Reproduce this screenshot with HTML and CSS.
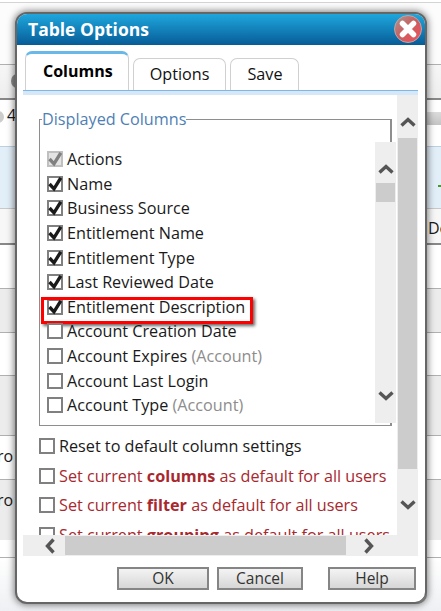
FILE: index.html
```html
<!DOCTYPE html>
<html lang="en">
<head>
    <meta charset="UTF-8">
    <meta name="viewport" content="width=device-width, initial-scale=1.0">
    <title>Table Options</title>
    <link rel="stylesheet" href="styles.css">
</head>
<body>
    <svg class="defs" width="0" height="0">
        <symbol id="tick" viewBox="0 0 16 16">
            <path d="M2.5 8 L7 12.8 L13.8 1.8" fill="none" stroke="currentColor" stroke-width="3.4"/>
        </symbol>
        <symbol id="chev" viewBox="0 0 16 10">
            <path d="M1.5 8.5 L8 2.5 L14.5 8.5" fill="none" stroke="currentColor" stroke-width="3.4"/>
        </symbol>
    </svg>

    <!-- table behind the dialog -->
    <div class="page">
        <div class="row top"></div>
        <div class="row toolbar"><span class="tool-icon"></span></div>
        <div class="row pager">
            <span class="pager-dot"></span>
            <span class="pager-text">4</span>
            <span class="pager-band"></span>
        </div>
        <div class="row selected"><span class="green-mark"></span></div>
        <div class="row desc"><span class="far-text">De</span></div>
        <div class="row plain h-a"></div>
        <div class="row grey h-a"></div>
        <div class="row plain h-b"></div>
        <div class="row grey h-c"></div>
        <div class="row plain h-a"><span class="near-text">ro</span></div>
        <div class="row grey h-c no-line"><span class="near-text">ro</span></div>
        <div class="row plain h-f"></div>
        <div class="row bottom"></div>
    </div>

    <div class="dialog">
        <div class="title-bar">Table Options</div>
        <svg class="close" width="30" height="30" viewBox="0 0 30 30">
            <defs>
                <linearGradient id="closeFill" x1="0.1" y1="0.1" x2="0.9" y2="0.9">
                    <stop offset="0" stop-color="#ad8f8c"/>
                    <stop offset="0.45" stop-color="#c9605f"/>
                    <stop offset="1" stop-color="#e9525f"/>
                </linearGradient>
            </defs>
            <circle cx="15" cy="15" r="13.5" fill="url(#closeFill)" stroke="#bfa5a5"/>
            <path d="M9.5 9.5 L20.5 20.5 M20.5 9.5 L9.5 20.5" stroke="#fff" stroke-width="5.5" stroke-linecap="round"/>
        </svg>

        <div class="tabs">
            <div class="tab active">Columns</div>
            <div class="tab">Options</div>
            <div class="tab">Save</div>
        </div>
        <div class="tab-rule"></div>

        <div class="panel">
            <div class="panel-main">
                <div class="panel-scroll">
                    <fieldset class="columns">
                        <legend>Displayed Columns</legend>
                        <div class="list-wrap">
                            <ul class="list">
                                <li class="item disabled"><span class="box"><svg width="16" height="16"><use href="#tick"/></svg></span>Actions</li>
                                <li class="item"><span class="box"><svg width="16" height="16"><use href="#tick"/></svg></span>Name</li>
                                <li class="item"><span class="box"><svg width="16" height="16"><use href="#tick"/></svg></span>Business Source</li>
                                <li class="item"><span class="box"><svg width="16" height="16"><use href="#tick"/></svg></span>Entitlement Name</li>
                                <li class="item"><span class="box"><svg width="16" height="16"><use href="#tick"/></svg></span>Entitlement Type</li>
                                <li class="item"><span class="box"><svg width="16" height="16"><use href="#tick"/></svg></span>Last Reviewed Date</li>
                                <li class="item marked"><span class="box"><svg width="16" height="16"><use href="#tick"/></svg></span>Entitlement Description</li>
                                <li class="item"><span class="box"></span>Account Creation Date</li>
                                <li class="item"><span class="box"></span>Account Expires&nbsp;<span class="muted">(Account)</span></li>
                                <li class="item"><span class="box"></span>Account Last Login</li>
                                <li class="item"><span class="box"></span>Account Type&nbsp;<span class="muted">(Account)</span></li>
                            </ul>
                            <div class="vbar inner-bar">
                                <svg class="chev" width="16" height="10"><use href="#chev"/></svg>
                                <div class="thumb"></div>
                                <svg class="chev down" width="16" height="10"><use href="#chev"/></svg>
                            </div>
                        </div>
                    </fieldset>

                    <div class="defaults">
                        <div class="option"><span class="box"></span>Reset to default column settings</div>
                        <div class="option warn"><span class="box"></span><span>Set current <b>columns</b> as default for all users</span></div>
                        <div class="option warn"><span class="box"></span><span>Set current <b>filter</b> as default for all users</span></div>
                        <div class="option warn"><span class="box"></span><span>Set current <b>grouping</b> as default for all users</span></div>
                    </div>
                </div>
                <div class="vbar outer-bar">
                    <svg class="chev" width="16" height="10"><use href="#chev"/></svg>
                    <div class="thumb"></div>
                    <svg class="chev down" width="16" height="10"><use href="#chev"/></svg>
                </div>
            </div>
            <div class="hbar">
                <svg class="chev left" width="16" height="10"><use href="#chev"/></svg>
                <div class="hthumb"></div>
                <svg class="chev right" width="16" height="10"><use href="#chev"/></svg>
            </div>
        </div>

        <div class="buttons">
            <button class="btn ok">OK</button>
            <button class="btn cancel">Cancel</button>
            <button class="btn help">Help</button>
        </div>
        <div class="grip"></div>
    </div>
</body>
</html>
```

FILE: styles.css
```css
body {
    margin: 0;
    width: 441px;
    height: 611px;
    overflow: hidden;
    position: relative;
    background-color: #fff;
    font-family: "Open Sans", sans-serif;
    color: #1a1a1a;
}

.defs {
    position: absolute;
}

/* page behind */
.page {
    display: flex;
    flex-direction: column;
    height: 611px;
}

.row {
    flex: none;
    box-sizing: border-box;
    border-bottom: 1px solid #b0b0b0;
    position: relative;
}

.top {
    height: 63px;
    margin-top: 2px;
    border-top: 1px solid #d4d4d4;
    background: #fcfcfc;
}

.toolbar {
    height: 35px;
    background: linear-gradient(#f6f6f6, #eeeeee);
    border-bottom: 2px solid #888;
}

.tool-icon {
    position: absolute;
    left: 11px;
    top: 9px;
    width: 12px;
    height: 14px;
    border-radius: 50%;
    background: #8c8c8c;
}

.pager {
    height: 47px;
    background: #fff;
    border-bottom: 1px solid #bcd0e2;
}

.pager-text {
    position: absolute;
    left: 7px;
    top: 4px;
    font-size: 16px;
}

.pager-dot {
    position: absolute;
    left: -8px;
    top: 11px;
    width: 12px;
    height: 12px;
    border-radius: 50%;
    background: #ccc;
}

.pager-band {
    position: absolute;
    left: 420px;
    top: 12px;
    width: 21px;
    height: 13px;
    background: linear-gradient(#dcdcdc, #c4c4c4);
}

.selected {
    height: 62px;
    background: #e2eef8;
    border-bottom: 1px solid #c8c8c8;
}

.green-mark {
    position: absolute;
    left: 438px;
    top: 38px;
    width: 3px;
    height: 2px;
    background: #4a9a2a;
}

.desc {
    height: 36px;
    background: #f7f7f7;
    border-bottom: 2px solid #888;
}

.far-text {
    position: absolute;
    left: 428px;
    top: 8px;
    font-size: 16px;
}

.plain {
    background: #fff;
}

.grey {
    background: #ececec;
}

.no-line {
    border-bottom: none;
}

.h-a {
    height: 44px;
}

.h-b {
    height: 43px;
}

.h-c {
    height: 60px;
}

.h-f {
    height: 18px;
}

.bottom {
    flex: 1;
    border-bottom: none;
    background: linear-gradient(#fff, #eef0f3);
}

.near-text {
    position: absolute;
    left: -3px;
    top: 9px;
    font-size: 16px;
}

/* dialog */
.dialog {
    position: absolute;
    left: 15px;
    top: 12px;
    box-sizing: border-box;
    width: 412px;
    height: 592px;
    border: 2px solid #666;
    border-radius: 12px;
    background: #fff;
    box-shadow: 0 0 7px 1px rgba(0, 0, 0, 0.5);
    display: flex;
    flex-direction: column;
}

.title-bar {
    height: 31px;
    flex: none;
    padding-left: 11px;
    line-height: 31px;
    font-size: 17.5px;
    font-weight: 700;
    color: #fff;
    background: linear-gradient(#1ea7dd, #075c97);
    border-radius: 10px 10px 0 0;
}

.close {
    position: absolute;
    right: 2px;
    top: 0;
}

.tabs {
    display: flex;
    align-items: flex-end;
    gap: 4px;
    height: 45px;
    flex: none;
    padding-left: 8px;
    box-sizing: border-box;
    padding-top: 6px;
}

.tab {
    box-sizing: border-box;
    height: 32px;
    padding: 0 16px;
    line-height: 30px;
    font-size: 16.2px;
    color: #111;
    background: #fff;
    border: 1px solid #d0d0d0;
    border-bottom: 0;
    border-radius: 7px 7px 0 0;
}

.tab.active {
    height: 39px;
    padding: 0 15px 0 17px;
    line-height: 34px;
    font-size: 16px;
    font-weight: 700;
    border-top: 3px solid #6ab8e8;
    color: #000;
}

.tab-rule {
    flex: none;
    height: 5px;
    margin: 0 7px 0 6px;
    border-top: 1px solid #7db6ea;
    box-sizing: border-box;
    background: #d6e7f8;
}

.panel {
    flex: none;
    margin: 0 7px 0 6px;
    height: 461px;
    display: flex;
    flex-direction: column;
}

.panel-main {
    display: flex;
    height: 440px;
}

.panel-scroll {
    width: 374px;
    overflow: hidden;
    box-sizing: border-box;
    padding-left: 16px;
}

.columns {
    box-sizing: border-box;
    width: 353px;
    min-width: 0;
    height: 317px;
    margin: 14px 0 0;
    padding: 0;
    border: 1px solid #8e8e8e;
    border-right-width: 2px;
    border-radius: 0;
}

.columns legend {
    margin-left: 2px;
    padding: 0;
    font-size: 16.2px;
    line-height: 20px;
    color: #4f7fb5;
}

.list-wrap {
    display: flex;
    width: 356px;
    margin-top: 13px;
    height: 281px;
}

.list {
    list-style: none;
    width: 335px;
    flex: none;
    margin: 0;
    padding: 5px 0 0 7px;
    box-sizing: border-box;
}

.item {
    display: flex;
    align-items: center;
    height: 24.6px;
    font-size: 16.2px;
    white-space: nowrap;
    position: relative;
}

.box {
    box-sizing: border-box;
    flex: none;
    width: 16px;
    height: 16px;
    margin-right: 4px;
    border: 2px solid #808080;
    background: #fff;
    color: #1a1a1a;
    display: block;
}

.box svg {
    display: block;
    margin: -2px;
}

.disabled .box {
    background: #e4e4e4;
    border-color: #c0c0c0;
    color: #808080;
}

.muted {
    color: #8d8d8d;
}

/* red note drawn over the row */
.marked::after {
    content: "";
    position: absolute;
    box-sizing: border-box;
    left: -6px;
    top: 2px;
    width: 212px;
    height: 27px;
    border: 3px solid #f00;
    box-shadow: 2px 2px 3px rgba(0, 0, 0, 0.6);
    pointer-events: none;
}

.defaults {
    margin-top: 5px;
}

.option {
    display: flex;
    align-items: center;
    height: 29.7px;
    font-size: 16.2px;
    white-space: nowrap;
}

.warn {
    color: #a8282e;
}

.vbar {
    flex: none;
    width: 21px;
    background: #eee;
    position: relative;
    display: flex;
    flex-direction: column;
    align-items: center;
}

.thumb {
    background: #ccc;
    width: 19px;
}

.chev {
    color: #555;
    flex: none;
}

.chev.down {
    transform: rotate(180deg);
}

.inner-bar .chev {
    margin-top: 22px;
}

.inner-bar .thumb {
    height: 19px;
    margin-top: 9px;
}

.inner-bar .chev.down {
    margin-top: auto;
    margin-bottom: 22px;
}

.outer-bar .chev {
    margin-top: 22px;
}

.outer-bar .thumb {
    height: 331px;
    margin-top: 11px;
}

.outer-bar .chev.down {
    margin-top: auto;
    margin-bottom: 25px;
}

.hbar {
    height: 21px;
    flex: none;
    background: #eee;
    display: flex;
    align-items: center;
}

.hthumb {
    width: 281px;
    height: 19px;
    background: #ccc;
    margin-left: 7px;
}

.chev.left {
    transform: rotate(-90deg);
    margin-left: 19px;
}

.chev.right {
    transform: rotate(90deg);
    margin-left: 15px;
}

.buttons {
    display: flex;
    margin-top: 11px;
    padding-left: 100px;
}

.btn {
    box-sizing: border-box;
    height: 23px;
    padding: 0;
    font-family: "Open Sans", sans-serif;
    font-size: 15.5px;
    line-height: 19px;
    color: #333;
    background: linear-gradient(#f4f4f4, #d6d6d6);
    border: 2px solid #858585;
    border-radius: 0;
}

.ok {
    width: 92px;
}

.cancel {
    width: 86px;
    margin-left: 8px;
}

.help {
    width: 88px;
    margin-left: 25px;
}

.grip {
    position: absolute;
    right: -2px;
    bottom: -2px;
    width: 0;
    height: 0;
    border-left: 10px solid transparent;
    border-bottom: 10px solid #777;
    border-radius: 0 0 10px 0;
}
```
